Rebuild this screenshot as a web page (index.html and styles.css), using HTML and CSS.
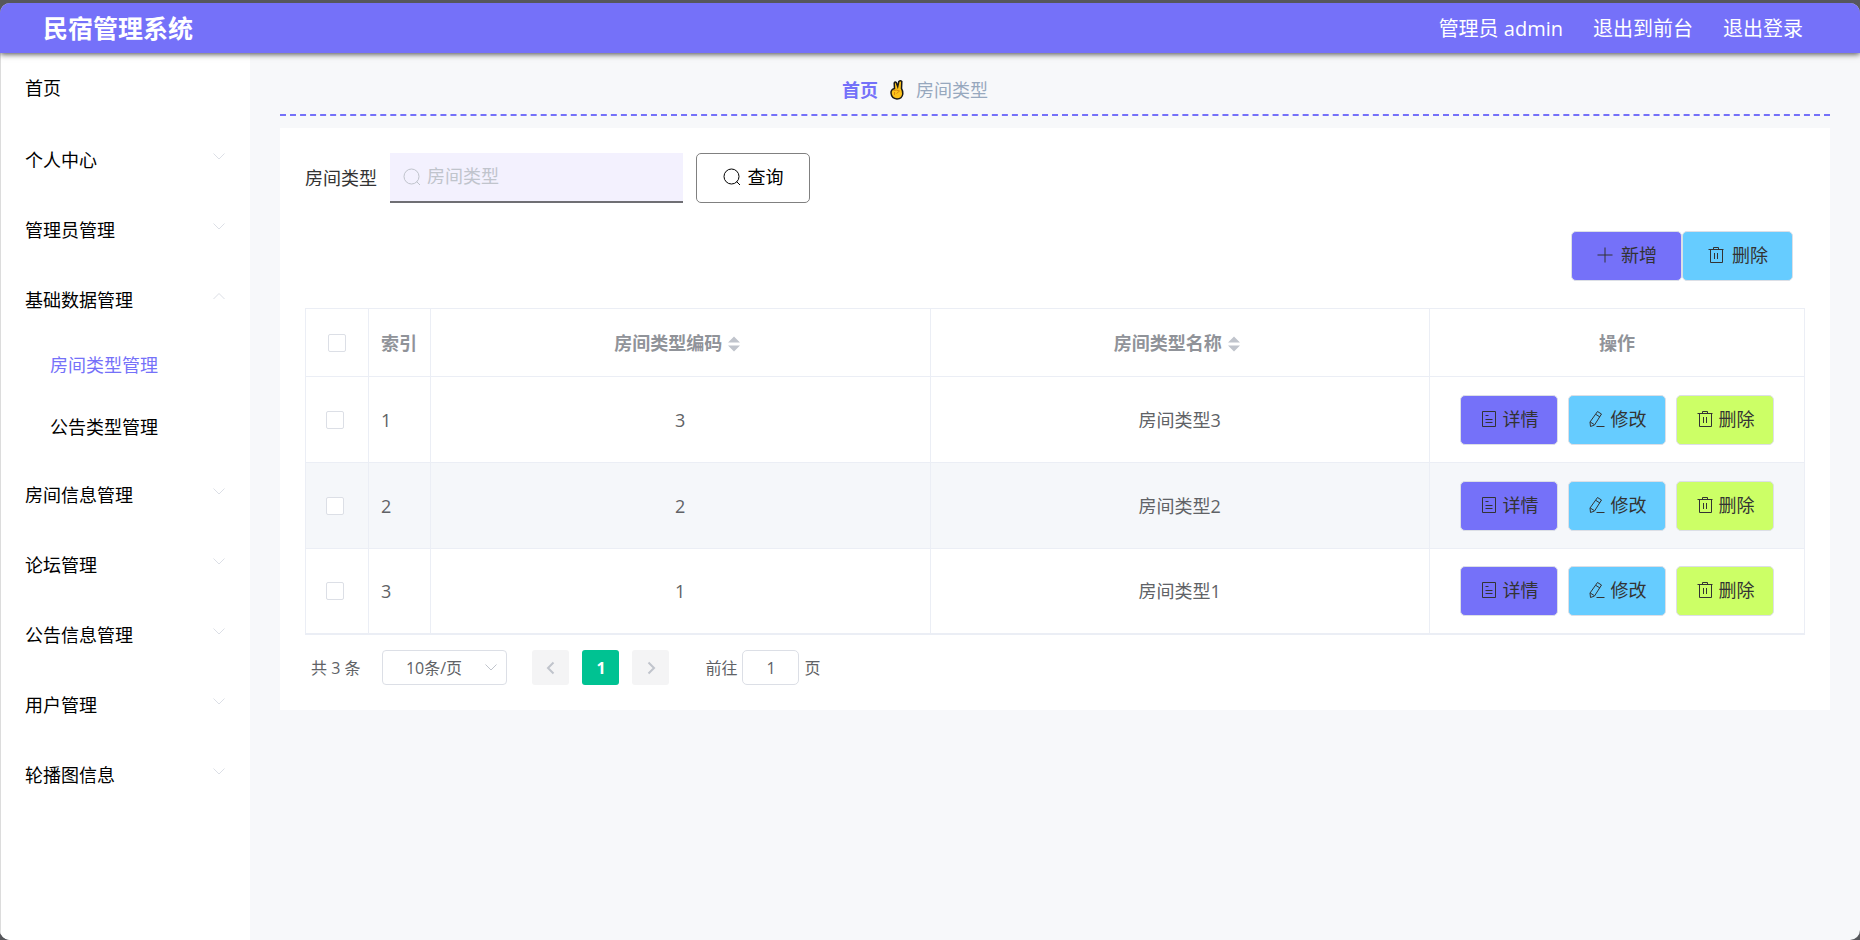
FILE: index.html
```html
<!DOCTYPE html>
<html lang="zh-CN">
<head>
    <meta charset="UTF-8">
    <meta name="viewport" content="width=device-width, initial-scale=1.0">
    <title>民宿管理系统</title>
    <link rel="stylesheet" href="styles.css">
</head>
<body>
    <!-- shared icons -->
    <svg class="icon-defs" aria-hidden="true">
        <symbol id="icon-search" viewBox="0 0 18 18"><circle cx="8.5" cy="8.5" r="7.5"/><path d="M13.5 13.5l3.5 3.5"/></symbol>
        <symbol id="icon-plus" viewBox="0 0 18 18"><path d="M9 1.5v15M1.5 9h15"/></symbol>
        <symbol id="icon-delete" viewBox="0 0 18 18"><path d="M1.5 3.500h15M3.5 3.500v13h12v-13M6.5 3.500v-2h5v2M7.5 7v6M10.5 7v6"/></symbol>
        <symbol id="icon-detail" viewBox="0 0 18 18"><path d="M2.5 1.5h13v15h-13zM5.5 5.5h3M5.5 9.5h7M5.5 12.5h7"/></symbol>
        <symbol id="icon-edit" viewBox="0 0 18 18"><path d="M9.500 1.500l4 2.500-7 11-4 1.500-.5-4.500zM8 4.500l4 2.500M2.200 12l4 2.500M8.500 16.500h8"/></symbol>
        <symbol id="icon-down" viewBox="0 0 14 14"><path d="M1.500 4.500L7 10l5.500-5.500"/></symbol>
        <symbol id="icon-up" viewBox="0 0 14 14"><path d="M1.500 10L7 4.500l5.500 5.500"/></symbol>
        <symbol id="icon-sort" viewBox="0 0 12 16"><path d="M0 6.500l6-6 6 6zM0 9.500l6 6 6-6z"/></symbol>
    </svg>

    <div class="app">
        <header class="header">
            <h1 class="title">民宿管理系统</h1>
            <nav class="user-nav">
                <span>管理员 admin</span>
                <a href="#">退出到前台</a>
                <a href="#">退出登录</a>
            </nav>
        </header>

        <div class="container">
            <aside class="sidebar">
                <ul class="menu">
                    <li class="home"><a href="#">首页</a></li>
                    <li><a href="#">个人中心<svg class="arrow"><use href="#icon-down"/></svg></a></li>
                    <li><a href="#">管理员管理<svg class="arrow"><use href="#icon-down"/></svg></a></li>
                    <li>
                        <a href="#">基础数据管理<svg class="arrow"><use href="#icon-up"/></svg></a>
                        <ul class="submenu">
                            <li><a href="#" class="active">房间类型管理</a></li>
                            <li><a href="#">公告类型管理</a></li>
                        </ul>
                    </li>
                    <li><a href="#">房间信息管理<svg class="arrow"><use href="#icon-down"/></svg></a></li>
                    <li><a href="#">论坛管理<svg class="arrow"><use href="#icon-down"/></svg></a></li>
                    <li><a href="#">公告信息管理<svg class="arrow"><use href="#icon-down"/></svg></a></li>
                    <li><a href="#">用户管理<svg class="arrow"><use href="#icon-down"/></svg></a></li>
                    <li><a href="#">轮播图信息<svg class="arrow"><use href="#icon-down"/></svg></a></li>
                </ul>
            </aside>

            <main class="main">
                <nav class="breadcrumb">
                    <a href="#">首页</a>
                    <svg class="hand" viewBox="0 0 14 20" aria-hidden="true">
                        <path d="M4.500 8.500L4.200 3Q5 1.300 6.200 2.500L7.700 6.500 8.800 1.500Q10.500 0 11.800 1.500L11.500 8.500Q13 11 12.800 14 12 19 7 19 1.500 18.500 1 13 .8 9.500 4.500 8.500z" fill="#fcc21b" stroke="#1b1a17" stroke-width="1.500"/>
                        <path d="M3.500 10.500q3-1 6 .5l-3 2.500M4.500 12v3" fill="none" stroke="#d98b12"/>
                    </svg>
                    <span>房间类型</span>
                </nav>

                <section class="card">
                    <form class="search-form">
                        <label for="typeName">房间类型</label>
                        <div class="search-box">
                            <svg class="icon"><use href="#icon-search"/></svg>
                            <input type="text" id="typeName" placeholder="房间类型">
                        </div>
                        <button type="button" class="btn btn-search"><svg class="icon"><use href="#icon-search"/></svg>查询</button>
                    </form>

                    <div class="toolbar">
                        <button type="button" class="btn btn-purple"><svg class="icon"><use href="#icon-plus"/></svg>新增</button>
                        <button type="button" class="btn btn-blue"><svg class="icon"><use href="#icon-delete"/></svg>删除</button>
                    </div>

                    <table class="table">
                        <colgroup>
                            <col class="col-check">
                            <col class="col-index">
                            <col>
                            <col>
                            <col class="col-action">
                        </colgroup>
                        <thead>
                            <tr>
                                <th class="check"><input type="checkbox" aria-label="全选"></th>
                                <th class="index">索引</th>
                                <th>房间类型编码<svg class="sort"><use href="#icon-sort"/></svg></th>
                                <th>房间类型名称<svg class="sort"><use href="#icon-sort"/></svg></th>
                                <th>操作</th>
                            </tr>
                        </thead>
                        <tbody>
                            <tr>
                                <td class="check"><input type="checkbox" aria-label="选择 1"></td>
                                <td class="index">1</td>
                                <td>3</td>
                                <td>房间类型3</td>
                                <td>
                                    <div class="actions">
                                        <button type="button" class="btn btn-purple"><svg class="icon"><use href="#icon-detail"/></svg>详情</button>
                                        <button type="button" class="btn btn-blue"><svg class="icon"><use href="#icon-edit"/></svg>修改</button>
                                        <button type="button" class="btn btn-green"><svg class="icon"><use href="#icon-delete"/></svg>删除</button>
                                    </div>
                                </td>
                            </tr>
                            <tr class="striped">
                                <td class="check"><input type="checkbox" aria-label="选择 2"></td>
                                <td class="index">2</td>
                                <td>2</td>
                                <td>房间类型2</td>
                                <td>
                                    <div class="actions">
                                        <button type="button" class="btn btn-purple"><svg class="icon"><use href="#icon-detail"/></svg>详情</button>
                                        <button type="button" class="btn btn-blue"><svg class="icon"><use href="#icon-edit"/></svg>修改</button>
                                        <button type="button" class="btn btn-green"><svg class="icon"><use href="#icon-delete"/></svg>删除</button>
                                    </div>
                                </td>
                            </tr>
                            <tr>
                                <td class="check"><input type="checkbox" aria-label="选择 3"></td>
                                <td class="index">3</td>
                                <td>1</td>
                                <td>房间类型1</td>
                                <td>
                                    <div class="actions">
                                        <button type="button" class="btn btn-purple"><svg class="icon"><use href="#icon-detail"/></svg>详情</button>
                                        <button type="button" class="btn btn-blue"><svg class="icon"><use href="#icon-edit"/></svg>修改</button>
                                        <button type="button" class="btn btn-green"><svg class="icon"><use href="#icon-delete"/></svg>删除</button>
                                    </div>
                                </td>
                            </tr>
                        </tbody>
                    </table>

                    <div class="pagination">
                        <span class="total">共 3 条</span>
                        <div class="size-box">
                            <select aria-label="每页条数">
                                <option>10条/页</option>
                                <option>20条/页</option>
                            </select>
                            <svg class="arrow"><use href="#icon-down"/></svg>
                        </div>
                        <div class="pager">
                            <button type="button" aria-label="上一页" disabled><svg viewBox="0 0 14 14"><path d="M9.500 1.500L4 7l5.500 5.500"/></svg></button>
                            <button type="button" class="current">1</button>
                            <button type="button" aria-label="下一页" disabled><svg viewBox="0 0 14 14"><path d="M4.500 1.500L10 7l-5.500 5.500"/></svg></button>
                        </div>
                        <div class="jump">
                            <label for="page">前往</label>
                            <input type="text" id="page" value="1">
                            <span>页</span>
                        </div>
                    </div>
                </section>
            </main>
        </div>
    </div>
</body>
</html>
```
FILE: styles.css
```css
* {
    box-sizing: border-box;
}

body {
    margin: 0;
    padding-top: 3px;
    background-color: #56575b;
    color: #333;
    font-family: "Open Sans", "Noto Sans CJK SC", sans-serif;
    font-size: 18px;
    line-height: 24px;
}

a {
    color: inherit;
    text-decoration: none;
}

ul {
    list-style: none;
    margin: 0;
    padding: 0;
}

button, input, select {
    font: inherit;
}

svg {
    fill: none;
    stroke: currentColor;
}

.icon-defs {
    display: none;
}

.app {
    display: flex;
    flex-direction: column;
    min-height: calc(100vh - 3px);
    border-radius: 10px;
    overflow: hidden;
    background-color: #f7f8fa;
}

/* header */
.header {
    display: flex;
    align-items: center;
    justify-content: space-between;
    height: 50px;
    padding: 0 57px 0 43px;
    background-color: #7571f9;
    color: #fff;
    box-shadow: 0 1px 6px #444;
    z-index: 1;
}

.title {
    margin: 0;
    font-size: 25px;
    font-weight: bold;
}

.user-nav {
    display: flex;
    gap: 30px;
    padding-top: 2px;
    font-size: 20px;
}

.container {
    display: flex;
    flex: 1;
}

/* sidebar */
.sidebar {
    flex: none;
    width: 250px;
    background-color: #fff;
    border-left: 1px solid #dcdcdc;
    color: #000;
}

.menu a {
    display: flex;
    align-items: center;
    justify-content: space-between;
    height: 70px;
    padding: 0 24px;
}

.menu .home {
    margin-bottom: 2px;
}

.arrow {
    width: 14px;
    height: 14px;
    color: #dcdfe6;
}

.menu .arrow {
    margin-bottom: 8px;
}

.menu .submenu {
    padding-bottom: 1px;
}

.menu .submenu a {
    height: 60px;
    padding: 0 49px;
    margin-bottom: 2px;
}

.menu .submenu .active {
    color: #7571f9;
}

/* content */
.main {
    flex: 1;
    padding: 20px 30px;
}

.breadcrumb {
    display: flex;
    align-items: center;
    justify-content: center;
    height: 43px;
    padding: 0 280px 7px 0;
    margin-bottom: 12px;
    border-bottom: 2px dashed #7571f9;
    color: #97a8be;
}

.breadcrumb a {
    color: #7571f9;
    font-weight: bold;
}

.hand {
    width: 14px;
    height: 20px;
    margin: 0 12px;
}

.card {
    padding: 25px;
    background-color: #fff;
}

.search-form {
    display: flex;
    align-items: center;
}

.search-box {
    display: flex;
    align-items: center;
    width: 293px;
    height: 50px;
    margin: 0 13px;
    padding-left: 13px;
    background-color: #f3f1fe;
    border-bottom: 2px solid #6f6f74;
    color: #c0c4cc;
}

.search-box input {
    flex: 1;
    min-width: 0;
    padding: 0 6px 2px;
    border: none;
    outline: none;
    background: none;
    color: #333;
}

.search-box input::placeholder {
    color: #c0c4cc;
}

.icon {
    flex: none;
    width: 18px;
    height: 18px;
}

.btn {
    display: flex;
    align-items: center;
    justify-content: center;
    gap: 5px;
    width: 98px;
    height: 50px;
    padding: 0 0 2px;
    border: 1px solid #dcdfe6;
    border-radius: 5px;
    color: #333;
    cursor: pointer;
}

.btn-search {
    gap: 7px;
    width: 114px;
    background-color: #fff;
    border-color: #808080;
    color: #000;
}

.btn-purple {
    background-color: #7571f9;
}

.btn-blue {
    background-color: #66ccff;
}

.btn-green {
    background-color: #ccff66;
}

.toolbar {
    display: flex;
    justify-content: flex-end;
    padding: 28px 12px 27px 0;
}

.toolbar .btn {
    gap: 7px;
    width: 111px;
}

/* table */
.table {
    width: 100%;
    table-layout: fixed;
    border-collapse: separate;
    border-spacing: 0;
    border: 1px solid #ebeef5;
    border-right: none;
    color: #606266;
    text-align: center;
}

.col-check {
    width: 63px;
}

.col-index {
    width: 62px;
}

.col-action {
    width: 375px;
}

.table th,
.table td {
    height: 86px;
    padding: 0 12px;
    border: solid #ebeef5;
    border-width: 0 1px 1px 0;
}

.table th {
    height: 68px;
    color: #909399;
}

.table tbody tr:last-child td {
    height: 85px;
}

.table .index {
    text-align: left;
}

.table .check {
    padding: 0 20px;
    text-align: left;
}

.table th.check {
    padding-left: 22px;
}

.striped {
    background-color: #f5f7fa;
}

input[type="checkbox"] {
    appearance: none;
    display: block;
    width: 18px;
    height: 18px;
    margin: 0;
    border: 1px solid #dcdfe6;
    border-radius: 2px;
    background-color: #fff;
}

.sort {
    width: 12px;
    height: 16px;
    margin: 0 6px;
    vertical-align: -2px;
    fill: #c0c4cc;
    stroke: none;
}

.actions {
    display: flex;
    justify-content: center;
    gap: 10px;
}

/* pagination */
.pagination {
    display: flex;
    align-items: center;
    padding: 15px 6px 0;
    font-size: 16px;
    color: #606266;
}

.size-box {
    position: relative;
    margin: 0 25px 0 22px;
}

.size-box select {
    display: block;
    appearance: none;
    width: 125px;
    height: 35px;
    padding: 0 22px 0 0;
    border: 1px solid #dcdfe6;
    border-radius: 4px;
    background-color: #fff;
    color: #606266;
    text-align: center;
    text-align-last: center;
}

/* arrow lies over the select */
.size-box .arrow {
    position: absolute;
    top: 10px;
    right: 9px;
    color: #c0c4cc;
    pointer-events: none;
}

.pager {
    display: flex;
    gap: 13px;
}

.pager button {
    display: flex;
    align-items: center;
    justify-content: center;
    width: 37px;
    height: 35px;
    padding: 0;
    border: none;
    border-radius: 3px;
    background-color: #f4f4f5;
    color: #c0c4cc;
}

.pager svg {
    width: 14px;
    height: 14px;
    stroke-width: 2;
}

.pager .current {
    background-color: #00c292;
    color: #fff;
    font-weight: bold;
}

.jump {
    display: flex;
    align-items: center;
    gap: 5px;
    margin-left: 36px;
}

.jump input {
    width: 57px;
    height: 35px;
    padding: 0;
    border: 1px solid #dcdfe6;
    border-radius: 5px;
    color: #606266;
    text-align: center;
}
```
